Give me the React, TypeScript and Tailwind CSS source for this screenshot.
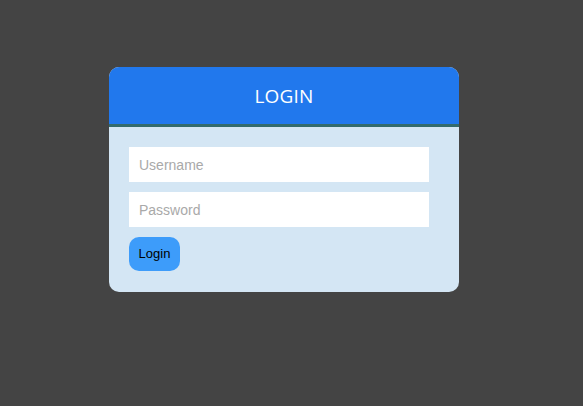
export default function App() {
  return (
    <main className="min-h-screen w-full bg-[#444444] pt-[67px] pl-[109px]">
      <div className="w-[350px] overflow-hidden rounded-[10px] bg-[#d4e6f4]">
        <div className="flex h-[56px] items-center justify-center bg-[#2178ed] border-b-[3px] border-[#336b6c] box-content pt-[1px]">
          <h1 className="text-[19px] text-white font-['Open_Sans',sans-serif] tracking-[0.2px]">LOGIN</h1>
        </div>
        <form className="flex flex-col gap-[10px] px-[20px] pt-[20px] pb-[21px]">
          <input
            type="text"
            placeholder="Username"
            className="h-[35px] w-[300px] bg-white px-[10px] text-[14px] font-['Liberation_Sans',Arial,sans-serif] placeholder:text-[#a9a9a9] outline-none"
          />
          <input
            type="password"
            placeholder="Password"
            className="h-[35px] w-[300px] bg-white px-[10px] text-[14px] font-['Liberation_Sans',Arial,sans-serif] placeholder:text-[#a9a9a9] outline-none"
          />
          <button
            type="button"
            className="h-[34px] w-[51px] rounded-[10px] bg-[#3d9cfa] text-[13px] text-black font-['Liberation_Sans',Arial,sans-serif]"
          >
            Login
          </button>
        </form>
      </div>
    </main>
  );
}
